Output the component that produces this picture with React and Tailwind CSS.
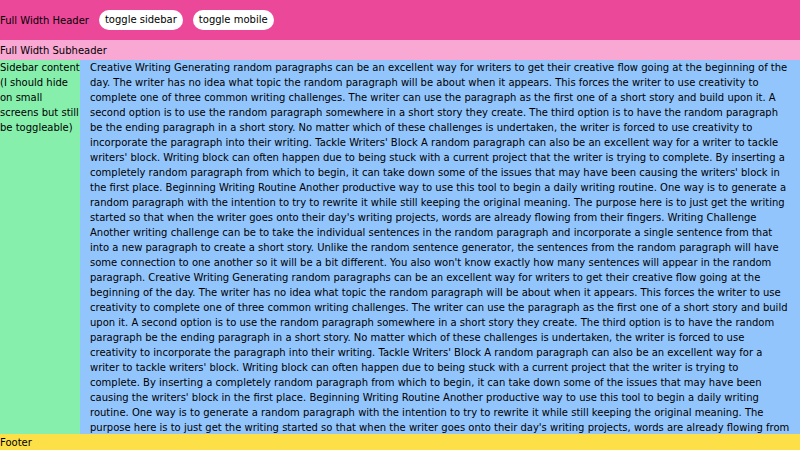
import React from "react";

const PARA =
  "Creative Writing Generating random paragraphs can be an excellent way for writers to get their creative flow going at the beginning of the day. The writer has no idea what topic the random paragraph will be about when it appears. This forces the writer to use creativity to complete one of three common writing challenges. The writer can use the paragraph as the first one of a short story and build upon it. A second option is to use the random paragraph somewhere in a short story they create. The third option is to have the random paragraph be the ending paragraph in a short story. No matter which of these challenges is undertaken, the writer is forced to use creativity to incorporate the paragraph into their writing. Tackle Writers' Block A random paragraph can also be an excellent way for a writer to tackle writers' block. Writing block can often happen due to being stuck with a current project that the writer is trying to complete. By inserting a completely random paragraph from which to begin, it can take down some of the issues that may have been causing the writers' block in the first place. Beginning Writing Routine Another productive way to use this tool to begin a daily writing routine. One way is to generate a random paragraph with the intention to try to rewrite it while still keeping the original meaning. The purpose here is to just get the writing started so that when the writer goes onto their day's writing projects, words are already flowing from their fingers. Writing Challenge Another writing challenge can be to take the individual sentences in the random paragraph and incorporate a single sentence from that into a new paragraph to create a short story. Unlike the random sentence generator, the sentences from the random paragraph will have some connection to one another so it will be a bit different. You also won't know exactly how many sentences will appear in the random paragraph.";

export default function App() {
  return (
    <div className="flex flex-col h-screen w-full overflow-hidden text-[10px] leading-[15px] text-black [font-family:'DejaVu_Sans',sans-serif]">
      <header className="h-[40px] shrink-0 bg-[#ec4899] flex items-center gap-[10px]">
        <span>Full Width Header</span>
        <button className="h-[20px] px-[6px] rounded-full bg-white text-black leading-[20px]">
          toggle sidebar
        </button>
        <button className="h-[20px] px-[6px] rounded-full bg-white text-black leading-[20px]">
          toggle mobile
        </button>
      </header>
      <div className="h-[20px] shrink-0 bg-[#f9a8d4] flex items-center">
        Full Width Subheader
      </div>
      <div className="flex flex-1 min-h-0 overflow-hidden">
        <aside className="w-[80px] shrink-0 bg-[#86efac]">
          Sidebar content (I should hide on small screens but still be toggleable)
        </aside>
        <main className="flex-1 min-w-0 bg-[#93c5fd] px-[10px] overflow-hidden">
          <p>
            {PARA} {PARA} {PARA}
          </p>
        </main>
      </div>
      <footer className="h-[16px] shrink-0 bg-[#fde047] flex items-center">
        Footer
      </footer>
    </div>
  );
}
